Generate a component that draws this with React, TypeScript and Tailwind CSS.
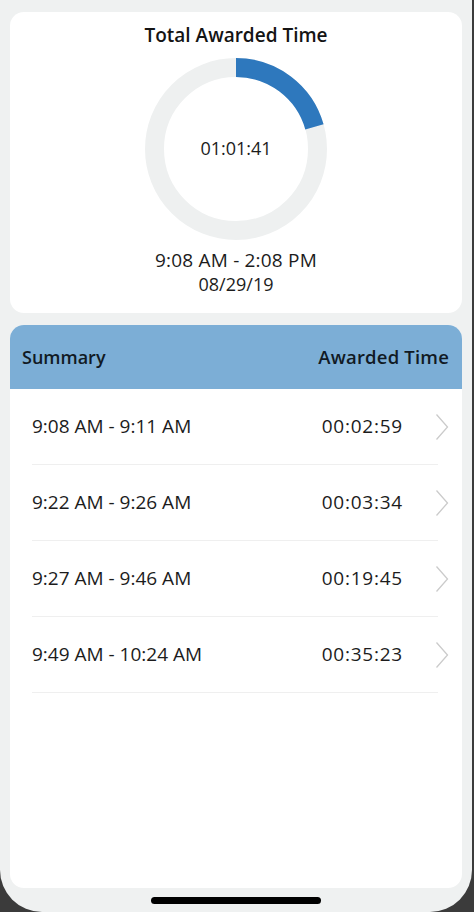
const ROWS = [
  { range: '9:08 AM - 9:11 AM', awarded: '00:02:59' },
  { range: '9:22 AM - 9:26 AM', awarded: '00:03:34' },
  { range: '9:27 AM - 9:46 AM', awarded: '00:19:45' },
  { range: '9:49 AM - 10:24 AM', awarded: '00:35:23' },
];

const TOTAL_SECONDS = 3701;
const WINDOW_SECONDS = 5 * 60 * 60;

function Donut() {
  const size = 182;
  const stroke = 19;
  const r = (size - stroke) / 2;
  const circ = 2 * Math.PI * r;
  const filled = (TOTAL_SECONDS / WINDOW_SECONDS) * circ;

  return (
    <div className="relative h-[182px] w-[182px]">
      <svg width={size} height={size} viewBox={`0 0 ${size} ${size}`} className="-rotate-90">
        <circle cx={size / 2} cy={size / 2} r={r} fill="none" stroke="#eef0f0" strokeWidth={stroke} />
        <circle
          cx={size / 2}
          cy={size / 2}
          r={r}
          fill="none"
          stroke="#2e78bd"
          strokeWidth={stroke}
          strokeDasharray={`${filled} ${circ}`}
        />
      </svg>
      <div className="absolute inset-0 flex items-center justify-center pb-[2px] text-[18px] text-[#1c1c1c]">
        01:01:41
      </div>
    </div>
  );
}

function Chevron() {
  return (
    <svg width="14" height="28" viewBox="0 0 14 28" className="-ml-[3px] shrink-0">
      <path d="M1.5 1.5 L12.5 14 L1.5 26.5" fill="none" stroke="#cbcbcb" strokeWidth="1.3" />
    </svg>
  );
}

export default function App() {
  return (
    <div className="h-[912px] w-[474px] bg-[#3b3b3b] font-['Open_Sans',sans-serif]">
      <div className="flex h-[912px] w-[472px] flex-col rounded-b-[42px] bg-[#eff1f1] px-[10px] pt-[12px]">
        <section className="flex flex-col items-center rounded-[14px] bg-white pb-[17px] pt-[10px]">
          <h1 className="text-[19px] font-semibold leading-[26px] text-[#141414]">Total Awarded Time</h1>
          <div className="mt-[10px]">
            <Donut />
          </div>
          <p className="mt-[8px] text-[19px] leading-[24px] tracking-[0.01em] text-[#1c1c1c]">
            9:08 AM - 2:08 PM
          </p>
          <p className="text-[18px] leading-[24px] text-[#1c1c1c]">08/29/19</p>
        </section>

        <section className="mt-[12px] flex flex-1 flex-col overflow-hidden rounded-[14px] bg-white">
          <div className="flex h-[64px] items-center justify-between bg-[#7caed6] px-[12px] text-[18px] font-semibold text-[#111a24]">
            <span>Summary</span>
            <span className="pr-[1px] text-[18.5px] tracking-[0.01em]">Awarded Time</span>
          </div>
          <ul className="pl-[22px] pr-[13px]">
            {ROWS.map((row) => (
              <li key={row.range} className="flex items-center">
                <div className="flex h-[76px] flex-1 items-center border-b border-[#efefef] pr-[35px] text-[19px] text-[#1c1c1c]">
                  <span className="flex-1">{row.range}</span>
                  <span className="tracking-[0.04em]">{row.awarded}</span>
                </div>
                <Chevron />
              </li>
            ))}
          </ul>
        </section>

        <div className="flex h-[24px] items-center justify-center">
          <div className="h-[7px] w-[170px] rounded-full bg-black" />
        </div>
      </div>
    </div>
  );
}
